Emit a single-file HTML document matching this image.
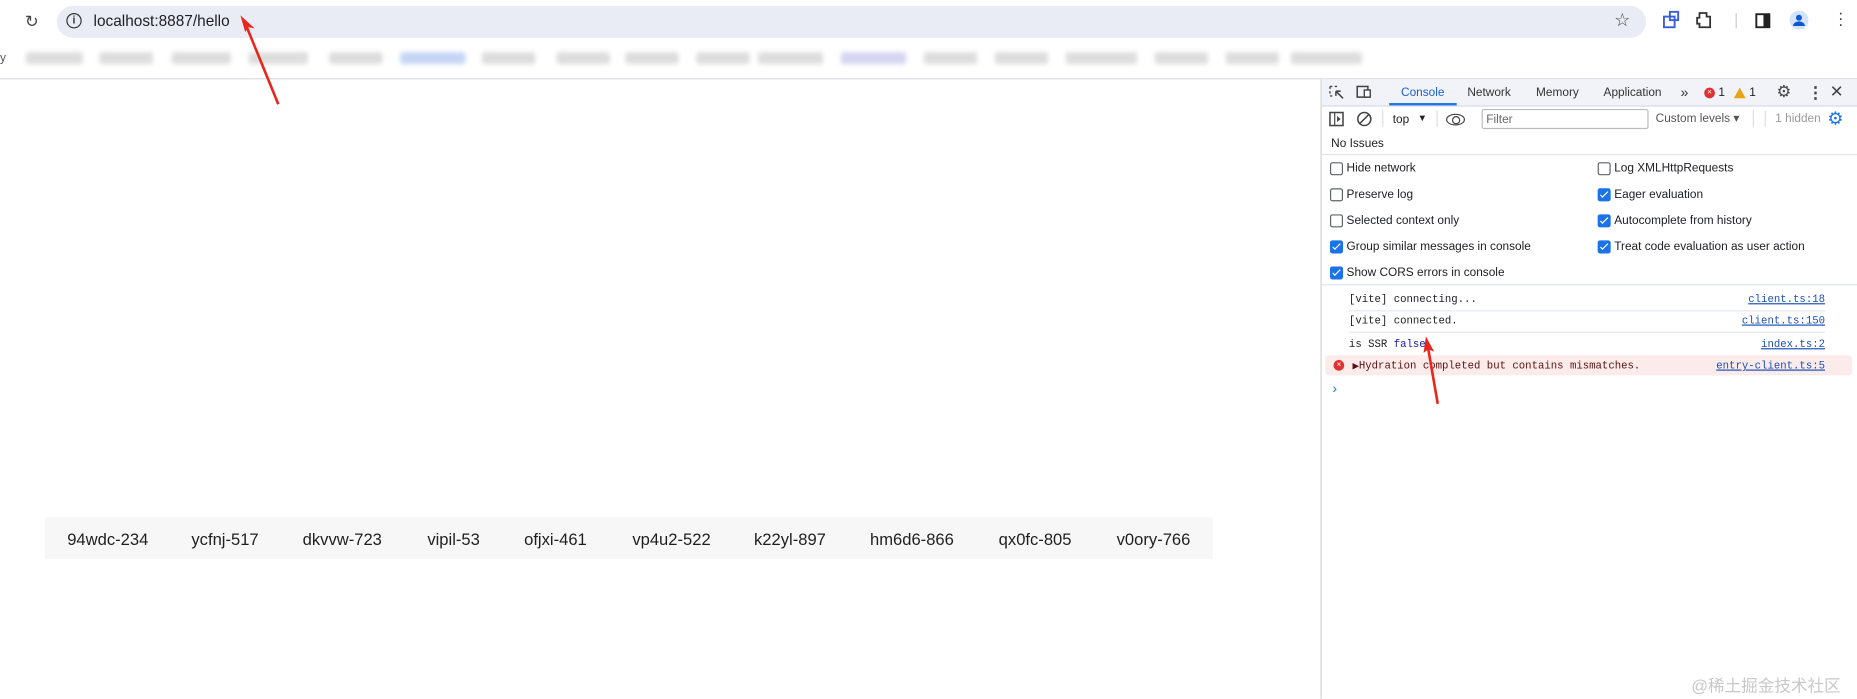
<!DOCTYPE html>
<html><head><meta charset="utf-8"><style>
html,body{margin:0;padding:0;width:1857px;height:699px;overflow:hidden;background:#fff;font-family:"Liberation Sans",sans-serif}
#w{position:absolute;left:0;top:0;width:1568px;height:590px;transform:scale(1.18431);transform-origin:0 0}
.a{position:absolute}
.t{position:absolute;font-size:10px;color:#202124;white-space:nowrap}
.mono{font-family:"Liberation Mono",monospace;font-size:9px}
.r{text-align:right;right:27px}
.cb{position:absolute;width:9px;height:9px;border:1px solid #5f6368;border-radius:2px;background:#fff}
.cb.on{background:#1a73e8;border-color:#1a73e8}
.cb.on:after{content:"";position:absolute;left:3px;top:0px;width:2px;height:6px;border:solid #fff;border-width:0 1.5px 1.5px 0;transform:rotate(45deg)}
.chip{position:absolute;top:447px;font-size:14px;color:#1f1f1f;transform:translateX(-50%)}
.lnk{color:#1a4fb5;text-decoration:underline}
.blur{position:absolute;top:44px;height:10px;background:#ddd;border-radius:2px;filter:blur(2px)}
</style></head><body><div id="w">
<div class="a" style="left:0;top:0;width:1568px;height:40px;background:#fff"></div>
<div class="a" style="left:21px;top:10px;font-size:14px;color:#444">&#8635;</div>
<div class="a" style="left:48px;top:5px;width:1342px;height:27px;border-radius:14px;background:#e9ecf4"></div>
<div class="a" style="left:56px;top:11px;width:11px;height:11px;border:1.5px solid #333;border-radius:50%;font-size:9px;line-height:11px;text-align:center;font-weight:bold;color:#333">i</div>
<div class="t" style="left:79px;top:10px;font-size:13px;color:#202124">localhost:8887/hello</div>
<div class="a" style="left:1363px;top:8px;font-size:15px;color:#444">&#9734;</div>
<svg class="a" style="left:1400px;top:8px" width="140" height="20"><rect x="5" y="6" width="9" height="9" fill="none" stroke="#3b5ed8" stroke-width="1.6"/><rect x="10" y="2" width="7" height="7" fill="none" stroke="#3b5ed8" stroke-width="1.6"/><path d="M35 3h6v3h3v9h-9v-3h-2v-5h2z" fill="none" stroke="#333" stroke-width="1.5"/><line x1="66" y1="3" x2="66" y2="16" stroke="#ccc"/><rect x="83" y="4" width="11" height="11" fill="none" stroke="#222" stroke-width="1.6"/><rect x="89" y="4" width="5" height="11" fill="#222"/><circle cx="119" cy="9" r="8" fill="#d3e3fd"/><circle cx="119" cy="7" r="2.5" fill="#0b57d0"/><path d="M114 14a5 4 0 0 1 10 0z" fill="#0b57d0"/></svg>
<div class="a" style="left:1552px;top:8px;font-size:14px;color:#444;line-height:5px">·<br>·<br>·</div>
<div class="t" style="left:0;top:44px;color:#555">y</div>
<div class="blur" style="left:22px;width:48px"></div><div class="blur" style="left:84px;width:45px"></div><div class="blur" style="left:145px;width:50px"></div><div class="blur" style="left:210px;width:50px"></div><div class="blur" style="left:278px;width:45px"></div><div class="blur" style="left:338px;width:55px;background:#c5d5f5"></div><div class="blur" style="left:407px;width:45px"></div><div class="blur" style="left:470px;width:45px"></div><div class="blur" style="left:528px;width:45px"></div><div class="blur" style="left:588px;width:45px"></div><div class="blur" style="left:640px;width:55px"></div><div class="blur" style="left:710px;width:55px;background:#d5d5f0"></div><div class="blur" style="left:780px;width:45px"></div><div class="blur" style="left:840px;width:45px"></div><div class="blur" style="left:900px;width:60px"></div><div class="blur" style="left:975px;width:45px"></div><div class="blur" style="left:1035px;width:45px"></div><div class="blur" style="left:1090px;width:60px"></div>
<div class="a" style="left:0;top:66px;width:1568px;height:1px;background:#dadce0"></div>
<div class="a" style="left:38px;top:437px;width:986px;height:35px;background:#f7f7f8"></div>
<div class="chip" style="left:91px">94wdc-234</div><div class="chip" style="left:190px">ycfnj-517</div><div class="chip" style="left:289px">dkvvw-723</div><div class="chip" style="left:383px">vipil-53</div><div class="chip" style="left:469px">ofjxi-461</div><div class="chip" style="left:567px">vp4u2-522</div><div class="chip" style="left:667px">k22yl-897</div><div class="chip" style="left:770px">hm6d6-866</div><div class="chip" style="left:874px">qx0fc-805</div><div class="chip" style="left:974px">v0ory-766</div>
<div class="a" style="left:1115px;top:67px;width:453px;height:523px;background:#fff;border-left:1px solid #d0d0d0"></div>
<div class="a" style="left:1116px;top:67px;width:452px;height:22px;background:#f1f3f9;border-bottom:1px solid #d6dbe6"></div>
<svg class="a" style="left:1120px;top:70px" width="45" height="16"><path d="M3 3h2M7 3h2M3 3v2M3 7v2M3 11h2" stroke="#444" stroke-width="1.2"/><path d="M8 7l6 6M8 7h4M8 7v4" stroke="#444" stroke-width="1.3" fill="none"/><rect x="26" y="3" width="9" height="9" fill="none" stroke="#444" stroke-width="1.3"/><rect x="32" y="6" width="5" height="6" fill="#fff" stroke="#444" stroke-width="1.2"/></svg>
<div class="t" style="left:1183px;top:73px;color:#1a5fd0">Console</div>
<div class="a" style="left:1173px;top:87px;width:57px;height:2px;background:#1a73e8"></div>
<div class="t" style="left:1239px;top:73px;color:#333">Network</div>
<div class="t" style="left:1297px;top:73px;color:#333">Memory</div>
<div class="t" style="left:1354px;top:73px;color:#333">Application</div>
<div class="t" style="left:1419px;top:71px;color:#333;font-size:12px">»</div>
<div class="a" style="left:1439px;top:74px;width:9px;height:9px;border-radius:50%;background:#e03030;color:#fff;font-size:7px;line-height:9px;text-align:center">×</div>
<div class="t" style="left:1451px;top:73px">1</div>
<div class="a" style="left:1464px;top:74px;width:0;height:0;border-left:5px solid transparent;border-right:5px solid transparent;border-bottom:9px solid #e8a317"></div>
<div class="t" style="left:1477px;top:73px">1</div>
<div class="a" style="left:1500px;top:69px;font-size:14px;color:#444">&#9881;</div>
<div class="a" style="left:1526px;top:70px;font-size:14px;color:#444;font-weight:bold">&#8942;</div>
<div class="a" style="left:1545px;top:69px;font-size:14px;color:#444">&#10005;</div>
<svg class="a" style="left:1121px;top:93px" width="40" height="16"><rect x="2" y="2" width="11" height="11" fill="none" stroke="#444" stroke-width="1.3"/><line x1="6" y1="2" x2="6" y2="13" stroke="#444"/><path d="M8 5l3 2.5-3 2.5z" fill="#444"/><circle cx="31" cy="7.5" r="5.5" fill="none" stroke="#444" stroke-width="1.3"/><line x1="27" y1="11.5" x2="35" y2="3.5" stroke="#444" stroke-width="1.3"/></svg>
<div class="a" style="left:1167px;top:93px;width:1px;height:14px;background:#ddd"></div>
<div class="t" style="left:1176px;top:96px">top</div><div class="t" style="left:1197px;top:95px;font-size:8px">▼</div>
<div class="a" style="left:1213px;top:93px;width:1px;height:14px;background:#ddd"></div>
<div class="a" style="left:1221px;top:96px;width:14px;height:8px;border:1.5px solid #444;border-radius:50%"></div>
<div class="a" style="left:1226px;top:98px;width:5px;height:5px;border:1.3px solid #444;border-radius:50%"></div>
<div class="a" style="left:1251px;top:92px;width:139px;height:15px;border:1px solid #bbb;border-radius:2px"></div>
<div class="t" style="left:1255px;top:96px;color:#666">Filter</div>
<div class="t" style="left:1398px;top:95px;color:#555">Custom levels ▾</div>
<div class="a" style="left:1480px;top:93px;width:1px;height:14px;background:#ddd"></div>
<div class="a" style="left:1490px;top:93px;width:1px;height:14px;background:#ddd"></div>
<div class="t" style="left:1499px;top:95px;color:#999">1 hidden</div>
<div class="a" style="left:1543px;top:91px;font-size:15px;color:#1a73e8">&#9881;</div>
<div class="t" style="left:1124px;top:116px">No Issues</div>
<div class="a" style="left:1116px;top:130px;width:452px;height:1px;background:#dde3ee"></div>
<div class="cb" style="left:1123px;top:137px"></div><div class="t" style="left:1137px;top:137px">Hide network</div>
<div class="cb" style="left:1123px;top:159px"></div><div class="t" style="left:1137px;top:159px">Preserve log</div>
<div class="cb" style="left:1123px;top:181px"></div><div class="t" style="left:1137px;top:181px">Selected context only</div>
<div class="cb on" style="left:1123px;top:203px"></div><div class="t" style="left:1137px;top:203px">Group similar messages in console</div>
<div class="cb on" style="left:1123px;top:225px"></div><div class="t" style="left:1137px;top:225px">Show CORS errors in console</div>
<div class="cb" style="left:1349px;top:137px"></div><div class="t" style="left:1363px;top:137px">Log XMLHttpRequests</div>
<div class="cb on" style="left:1349px;top:159px"></div><div class="t" style="left:1363px;top:159px">Eager evaluation</div>
<div class="cb on" style="left:1349px;top:181px"></div><div class="t" style="left:1363px;top:181px">Autocomplete from history</div>
<div class="cb on" style="left:1349px;top:203px"></div><div class="t" style="left:1363px;top:203px">Treat code evaluation as user action</div>
<div class="a" style="left:1116px;top:240px;width:452px;height:1px;background:#dde3ee"></div>
<div class="t mono" style="left:1139px;top:248px">[vite] connecting...</div><div class="t mono lnk r" style="top:248px">client.ts:18</div>
<div class="a" style="left:1139px;top:262px;width:402px;height:1px;background:#e3e7ef"></div>
<div class="t mono" style="left:1139px;top:266px">[vite] connected.</div><div class="t mono lnk r" style="top:266px">client.ts:150</div>
<div class="a" style="left:1139px;top:280px;width:402px;height:1px;background:#e3e7ef"></div>
<div class="t mono" style="left:1139px;top:286px">is SSR <span style="color:#1a1aa6">false</span></div><div class="t mono lnk r" style="top:286px">index.ts:2</div>
<div class="a" style="left:1119px;top:300px;width:445px;height:17px;background:#fcebeb;border-radius:3px"></div>
<div class="a" style="left:1126px;top:304px;width:9px;height:9px;border-radius:50%;background:#e03030;color:#fff;font-size:7px;line-height:9px;text-align:center">×</div>
<div class="t mono" style="left:1142px;top:304px;color:#5a1010"><span style="font-size:7px">▶</span>Hydration completed but contains mismatches.</div><div class="t mono lnk r" style="top:304px">entry-client.ts:5</div>
<div class="t" style="left:1125px;top:321px;color:#1a73e8;font-size:12px">›</div>
<div class="t" style="left:1428px;top:569px;color:#c8c8c8;font-size:14px;font-family:'Liberation Sans','Noto Sans CJK SC',sans-serif">@稀土掘金技术社区</div>
<svg class="a" style="left:0;top:0" width="1568" height="590"><path d="M235 88L206 17" stroke="#e8261d" stroke-width="2.2"/><path d="M203 13l12 11-5-1-3 4z" fill="#e8261d"/><path d="M1214 341L1205 289" stroke="#e8261d" stroke-width="2.2"/><path d="M1204 284l7 13-5-2-4 3z" fill="#e8261d"/></svg>
</div></body></html>
